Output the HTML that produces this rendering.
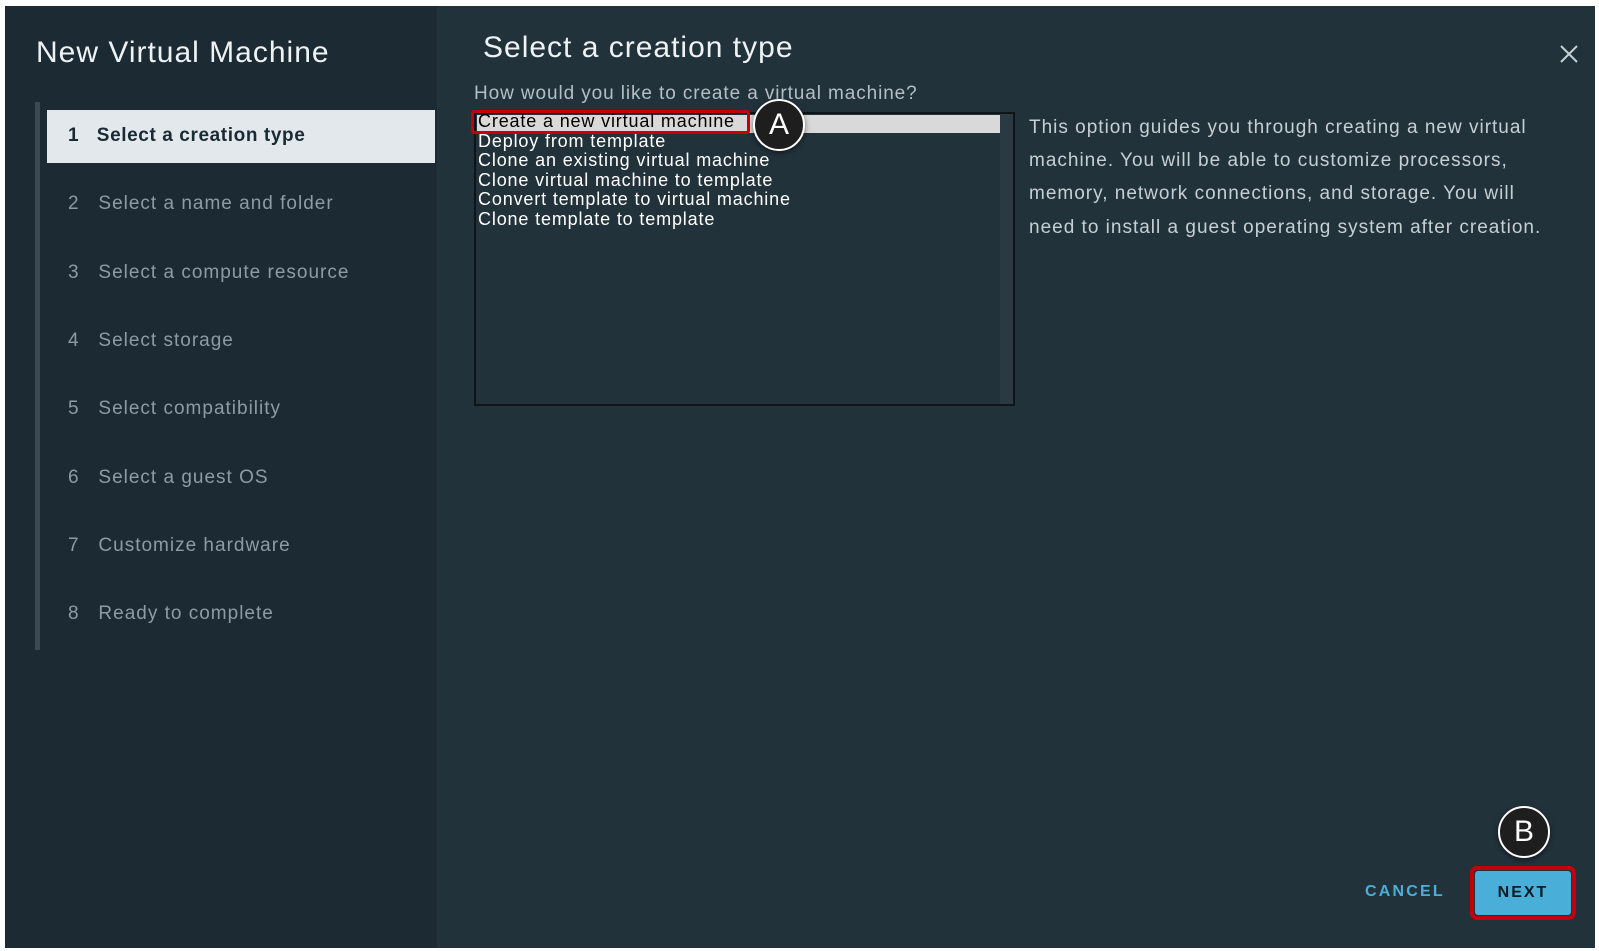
<!DOCTYPE html>
<html><head><meta charset="utf-8"><style>
*{margin:0;padding:0;box-sizing:border-box}
body{width:1599px;height:951px;background:#fff;position:relative;overflow:hidden;font-family:"Liberation Sans",sans-serif}
.a{position:absolute;white-space:nowrap}
#side{left:5px;top:6px;width:432px;height:942px;background:#1c2a33}
#main{left:437px;top:6px;width:1158px;height:942px;background:#22323b}
.it{left:68px;font-size:19px;color:#8d9ca4;line-height:24px;letter-spacing:1px}
.li{left:478px;font-size:18px;color:#fff;line-height:19.5px;letter-spacing:0.85px}
.circ{width:52px;height:52px;border-radius:50%;background:#1e1e1e;border:2px solid #fff;color:#fff;font-size:30px;text-align:center;line-height:47px;box-shadow:0 2px 6px rgba(0,0,0,.5)}
.d{left:1029px;font-size:19px;color:#c5cfd4;line-height:33px;letter-spacing:1px}
</style></head><body>
<div class="a" id="side"></div>
<div class="a" id="main"></div>
<div class="a" style="left:36px;top:36px;font-size:30px;color:#eef2f4;letter-spacing:1px">New Virtual Machine</div>
<div class="a" style="left:35px;top:102px;width:5px;height:548px;background:#3b4a52"></div>
<div class="a" style="left:47px;top:110px;width:388px;height:53px;background:#e2e8ec"></div>
<div class="a" style="left:68px;top:125px;font-size:19px;font-weight:bold;color:#1a2a33;letter-spacing:0.6px">1&nbsp;&nbsp;&nbsp;Select a creation type</div>
<div class="a it" style="top:192px">2&nbsp;&nbsp;&nbsp;Select a name and folder</div>
<div class="a it" style="top:261px">3&nbsp;&nbsp;&nbsp;Select a compute resource</div>
<div class="a it" style="top:329px">4&nbsp;&nbsp;&nbsp;Select storage</div>
<div class="a it" style="top:397px">5&nbsp;&nbsp;&nbsp;Select compatibility</div>
<div class="a it" style="top:466px">6&nbsp;&nbsp;&nbsp;Select a guest OS</div>
<div class="a it" style="top:534px">7&nbsp;&nbsp;&nbsp;Customize hardware</div>
<div class="a it" style="top:602px">8&nbsp;&nbsp;&nbsp;Ready to complete</div>
<div class="a" style="left:483px;top:31px;font-size:30px;color:#eef2f4;letter-spacing:1px">Select a creation type</div>
<div class="a" style="left:474px;top:83px;font-size:19px;color:#b3bfc5;letter-spacing:0.9px">How would you like to create a virtual machine?</div>
<div class="a" style="left:474px;top:112px;width:541px;height:294px;border:2px solid #0e1418;background:#22323b"></div>
<div class="a" style="left:1000px;top:114px;width:13px;height:290px;background:#2a3a42"></div>
<div class="a" style="left:477px;top:115px;width:523px;height:18px;background:#d9d9d9"></div>
<div class="a li" style="top:112px;color:#000">Create a new virtual machine</div>
<div class="a li" style="top:131.5px">Deploy from template</div>
<div class="a li" style="top:151px">Clone an existing virtual machine</div>
<div class="a li" style="top:170.5px">Clone virtual machine to template</div>
<div class="a li" style="top:190px">Convert template to virtual machine</div>
<div class="a li" style="top:209.5px">Clone template to template</div>
<div class="a" style="left:471px;top:110px;width:279px;height:24px;border:3px solid #c4000a;border-radius:3px"></div>
<div class="a circ" style="left:753px;top:99px">A</div>
<div class="a d" style="top:111px">This option guides you through creating a new virtual</div>
<div class="a d" style="top:144px">machine. You will be able to customize processors,</div>
<div class="a d" style="top:177px">memory, network connections, and storage. You will</div>
<div class="a d" style="top:211px">need to install a guest operating system after creation.</div>
<svg class="a" style="left:1559px;top:44px" width="20" height="20"><path d="M2 2L18 18M18 2L2 18" stroke="#c5cfd4" stroke-width="2"/></svg>
<div class="a" style="left:1365px;top:883px;font-size:16px;font-weight:bold;color:#49afd9;letter-spacing:2.2px">CANCEL</div>
<div class="a" style="left:1470px;top:866px;width:106px;height:54px;border:4px solid #c4000a;border-radius:7px"></div>
<div class="a" style="left:1475px;top:871px;width:96px;height:44px;background:#49afd9;border-radius:3px;color:#0c1c24;font-size:16px;font-weight:bold;letter-spacing:2px;text-align:center;line-height:44px">NEXT</div>
<div class="a circ" style="left:1498px;top:806px">B</div>
</body></html>
